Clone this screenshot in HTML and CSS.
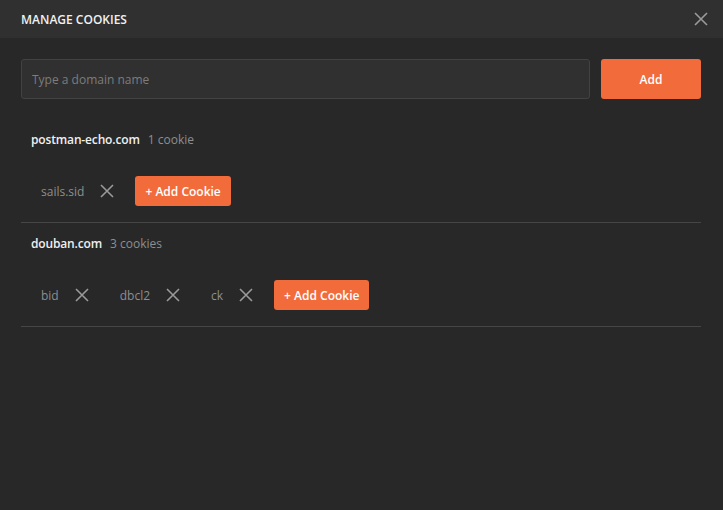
FILE: index.html
```html
<!DOCTYPE html>
<html>
<head>
<meta charset="utf-8">
<link rel="stylesheet" href="styles.css">
</head>
<body>
<div class="modal">
  <div class="header">
    <span class="title">MANAGE COOKIES</span>
    <span class="close"><svg width="14" height="14" viewBox="0 0 14 14"><path d="M1 1L13 13M13 1L1 13" stroke="#9a9a9a" stroke-width="1.6"/></svg></span>
  </div>
  <div class="body">
    <div class="add-row">
      <input class="domain-input" type="text" placeholder="Type a domain name">
      <button class="btn add-btn">Add</button>
    </div>
    <div class="domain first">
      <div class="domain-head"><span class="domain-name">postman-echo.com</span><span class="count">1 cookie</span></div>
      <div class="cookies">
        <div class="chip"><span>sails.sid</span><svg class="x" width="14" height="14" viewBox="0 0 14 14"><path d="M1 1L13 13M13 1L1 13" stroke="#9a9a9a" stroke-width="1.6"/></svg></div>
        <button class="btn cookie-btn">+ Add Cookie</button>
      </div>
    </div>
    <div class="domain">
      <div class="domain-head"><span class="domain-name">douban.com</span><span class="count">3 cookies</span></div>
      <div class="cookies">
        <div class="chip"><span>bid</span><svg class="x" width="14" height="14" viewBox="0 0 14 14"><path d="M1 1L13 13M13 1L1 13" stroke="#9a9a9a" stroke-width="1.6"/></svg></div>
        <div class="chip"><span>dbcl2</span><svg class="x" width="14" height="14" viewBox="0 0 14 14"><path d="M1 1L13 13M13 1L1 13" stroke="#9a9a9a" stroke-width="1.6"/></svg></div>
        <div class="chip"><span>ck</span><svg class="x" width="14" height="14" viewBox="0 0 14 14"><path d="M1 1L13 13M13 1L1 13" stroke="#9a9a9a" stroke-width="1.6"/></svg></div>
        <button class="btn cookie-btn">+ Add Cookie</button>
      </div>
    </div>
  </div>
</div>
</body>
</html>
```
FILE: styles.css
```css
* { box-sizing: border-box; }
html, body { margin: 0; height: 100%; }
body {
  background: #282828;
  font-family: "Open Sans", "Noto Sans", sans-serif;
  font-size: 12px;
  overflow: hidden;
}
.modal {
  width: 723px;
  height: 510px;
  background: #282828;
  display: flex;
  flex-direction: column;
}
.header {
  height: 38px;
  background: #303030;
  display: flex;
  align-items: center;
  justify-content: space-between;
  padding: 0 15px 0 21px;
}
.title {
  color: #f0f0f0;
  font-weight: 600;
  font-size: 12px;
}
.close { display: flex; }
.body {
  padding: 21px 22px 0 21px;
}
.add-row {
  display: flex;
  gap: 11px;
  height: 40px;
}
.domain-input {
  flex: 1;
  height: 40px;
  background: #303030;
  border: 1px solid #424242;
  border-radius: 3px;
  padding: 0 10px;
  font-family: inherit;
  font-size: 12px;
  color: #ddd;
  outline: none;
}
.domain-input::placeholder { color: #7c7c7c; }
.btn {
  background: #f26b3a;
  color: #fff;
  border: none;
  border-radius: 3px;
  font-family: inherit;
  font-weight: 600;
  font-size: 12px;
}
.add-btn { width: 100px; height: 40px; }
.domain {
  border-bottom: 1px solid #464646;
  padding: 0 10px;
}
.domain-head {
  display: flex;
  align-items: center;
  gap: 8px;
  height: 20px;
  line-height: 20px;
  margin-top: 11px;
}
.domain.first .domain-head { margin-top: 31px; }
.domain-name { color: #f0f0f0; font-weight: 600; letter-spacing: -0.15px; }
.count { color: #8e8e8e; }
.cookies {
  display: flex;
  align-items: center;
  gap: 11px;
  padding: 26px 0 16px;
}
.chip {
  display: flex;
  align-items: center;
  gap: 16px;
  padding: 0 10px;
  color: #8e8e8e;
  height: 30px;
}
.cookie-btn { height: 30px; padding: 0 10px; }
```
